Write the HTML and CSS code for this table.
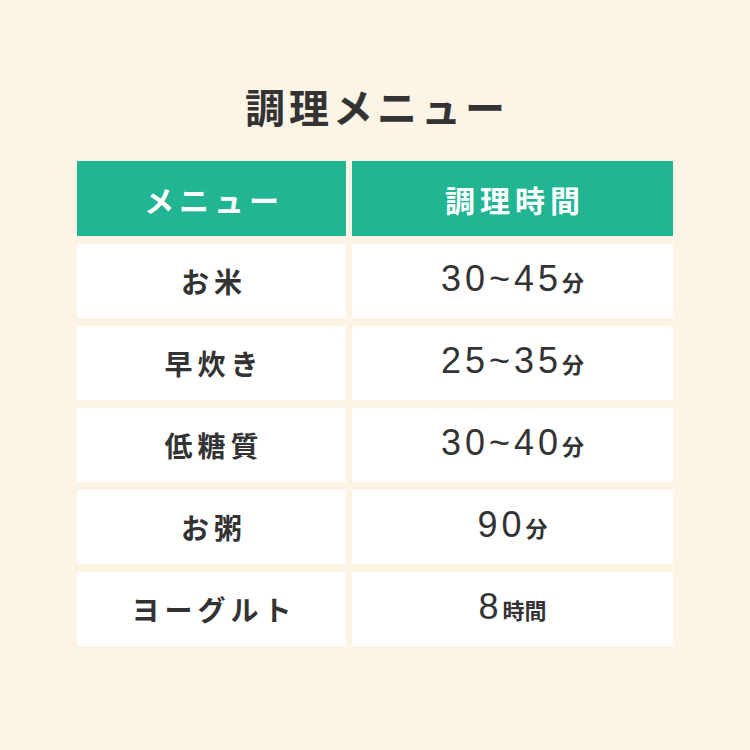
FILE: index.html
```html
<!DOCTYPE html>
<html lang="ja">
<head>
<meta charset="utf-8">
<link rel="stylesheet" href="styles.css">
</head>
<body>
<main class="page">
  <h1 class="title">調理メニュー</h1>
  <div class="table">
    <div class="cell head">メニュー</div>
    <div class="cell head">調理時間</div>
    <div class="cell name">お米</div>
    <div class="cell time"><span class="val"><span class="num">30~45</span><span class="unit">分</span></span></div>
    <div class="cell name">早炊き</div>
    <div class="cell time"><span class="val"><span class="num">25~35</span><span class="unit">分</span></span></div>
    <div class="cell name">低糖質</div>
    <div class="cell time"><span class="val"><span class="num">30~40</span><span class="unit">分</span></span></div>
    <div class="cell name">お粥</div>
    <div class="cell time"><span class="val"><span class="num">90</span><span class="unit">分</span></span></div>
    <div class="cell name">ヨーグルト</div>
    <div class="cell time"><span class="val"><span class="num">8</span><span class="unit">時間</span></span></div>
  </div>
</main>
</body>
</html>
```

FILE: styles.css
```css
html, body {
  margin: 0;
  padding: 0;
  background: #fcf4e5;
}
.page {
  width: 750px;
  height: 750px;
  box-sizing: border-box;
  padding-top: 82px;
  display: flex;
  flex-direction: column;
  align-items: center;
  font-family: "Noto Sans CJK JP", "Noto Sans", sans-serif;
  color: #333333;
}
.title {
  margin: 0 0 31px 0;
  font-size: 40px;
  line-height: 48px;
  font-weight: 700;
  letter-spacing: 4px;
  padding-left: 4px;
  color: #333333;
}
.table {
  display: grid;
  grid-template-columns: 269px 321px;
  grid-template-rows: 75px repeat(5, 74px);
  column-gap: 6px;
  row-gap: 8px;
}
.cell {
  display: flex;
  align-items: center;
  justify-content: center;
  background: #ffffff;
}
.head {
  background: #21b594;
  color: #ffffff;
  font-size: 30px;
  font-weight: 700;
  letter-spacing: 5px;
  padding-left: 5px;
}
.name {
  font-size: 28px;
  font-weight: 700;
  letter-spacing: 5px;
  padding-left: 5px;
}
.val {
  display: block;
  line-height: 40px;
  white-space: nowrap;
  padding-top: 1px;
}
.num {
  font-family: "Liberation Sans", Arial, sans-serif;
  font-size: 36px;
  letter-spacing: 4px;
}
.unit {
  font-size: 22px;
  font-weight: 700;
}
```
